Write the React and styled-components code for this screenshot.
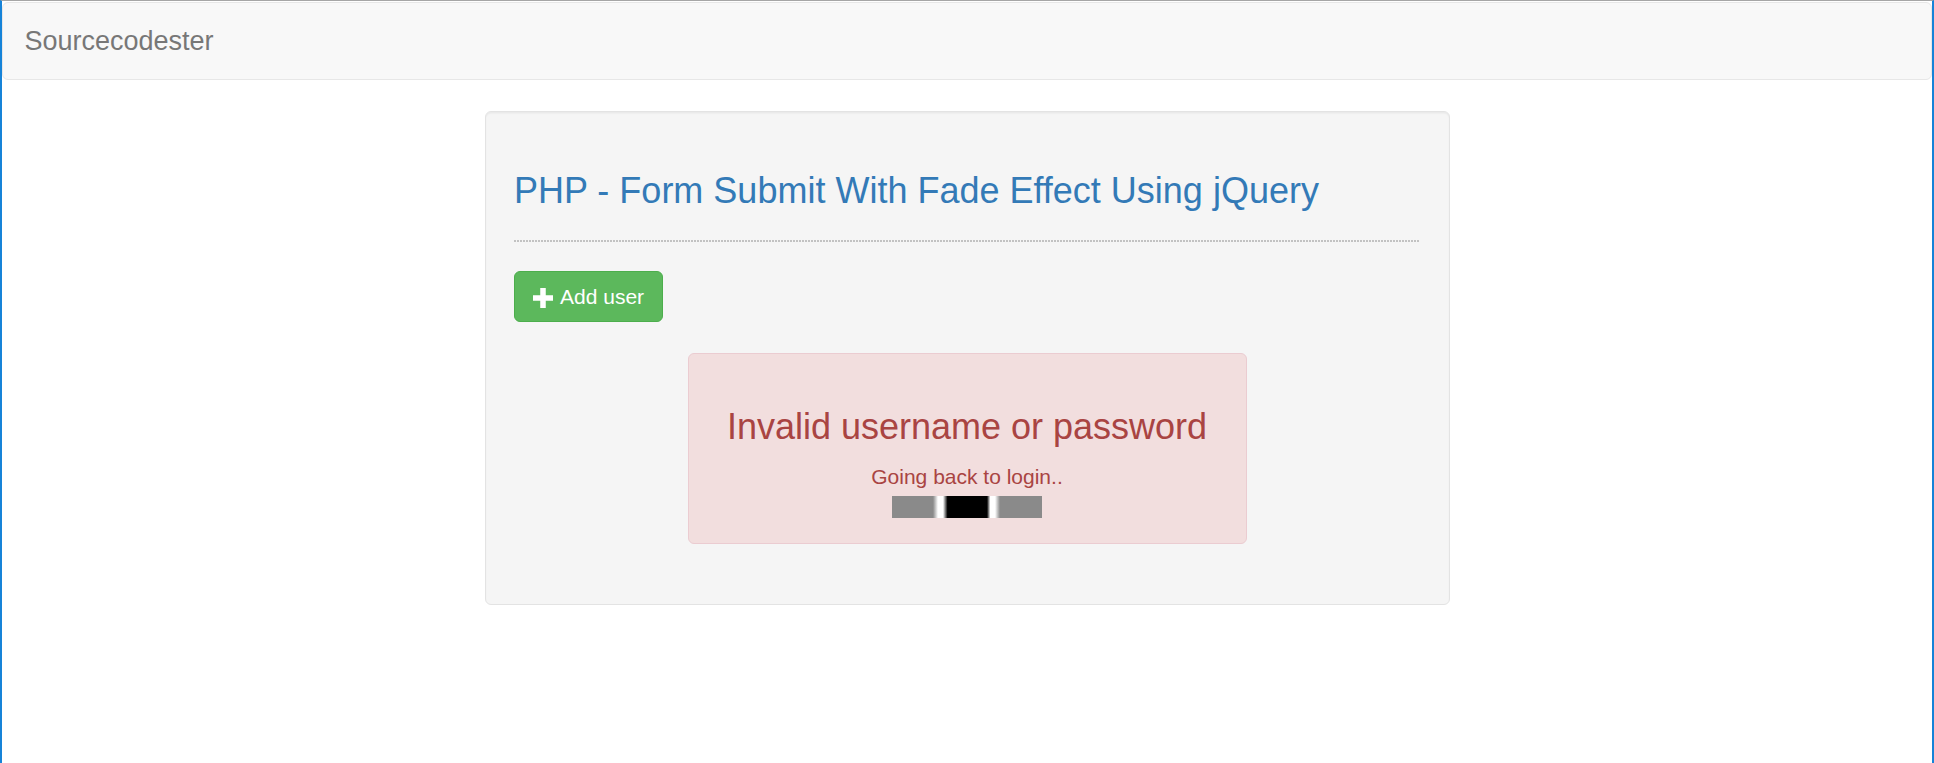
import React from 'react';
import styled, { createGlobalStyle } from 'styled-components';

const colors = {
  brand: '#777',
  title: '#337ab7',
  success: '#5cb85c',
  successBorder: '#4cae4c',
  danger: '#a94442',
  dangerBg: '#f2dede',
  dangerBorder: '#ebccd1',
};

const GlobalStyle = createGlobalStyle`
  * { box-sizing: border-box; }
  html, body {
    margin: 0;
    padding: 0;
    background: #fff;
  }
  body {
    font-family: "Liberation Sans", Arial, Helvetica, sans-serif;
    font-size: 21px;
    line-height: 1.42857;
    color: #333;
  }
`;

const Frame = styled.div`
  min-height: 763px;
  border-top: 1px solid #a6a6a6;
  border-left: 2px solid #1683d8;
  border-right: 2px solid #1683d8;
  padding-top: 1px;
`;

const Navbar = styled.nav`
  height: 78px;
  display: flex;
  align-items: center;
  padding-left: 21.5px;
  background: #f8f8f8;
  border: 1.5px solid #e7e7e7;
  border-radius: 6px;
`;

const Brand = styled.a`
  font-size: 27px;
  line-height: 30px;
  color: ${colors.brand};
  text-decoration: none;
`;

const Well = styled.main`
  width: 965px;
  margin: 31px auto 0;
  padding: 28.5px;
  background: #f5f5f5;
  border: 1.5px solid #e3e3e3;
  border-radius: 6px;
  box-shadow: inset 0 1.5px 1.5px rgba(0, 0, 0, 0.05);
`;

const Title = styled.h3`
  margin: 30px 0 0;
  font-size: 36px;
  line-height: 39.6px;
  font-weight: 500;
  color: ${(p) => p.color || colors.title};
`;

const Divider = styled.div`
  height: 1.5px;
  margin: 30.4px 0 29.5px;
  background: repeating-linear-gradient(to right, #c2c2c2 0, #c2c2c2 2px, transparent 2px, transparent 3px);
`;

const Button = styled.button`
  display: inline-flex;
  align-items: center;
  gap: 7px;
  height: 51px;
  padding: 0 18px;
  font-family: inherit;
  font-size: 21px;
  line-height: 30px;
  color: #fff;
  background: ${colors.success};
  border: 1.5px solid ${colors.successBorder};
  border-radius: 6px;
  cursor: pointer;
`;

const PlusIcon = styled.svg`
  width: 20px;
  height: 20px;
  margin-top: 2px;
  fill: #fff;
`;

const Alert = styled.div`
  width: 559px;
  margin: 31px auto 31px;
  padding: 22.5px;
  text-align: center;
  color: ${colors.danger};
  background: ${colors.dangerBg};
  border: 1.5px solid ${colors.dangerBorder};
  border-radius: 6px;
`;

const AlertTitle = styled(Title)`
  margin-bottom: 15px;
`;

const AlertText = styled.p`
  margin: 0;
  font-size: 21px;
  line-height: 30px;
`;

const Loader = styled.div`
  width: 150px;
  height: 22px;
  margin: 4.4px auto 3px;
  background: linear-gradient(
    to right,
    #8a8a8a 0,
    #8a8a8a 41px,
    #fff 46px,
    #fff 51px,
    #000 55.6px,
    #000 95px,
    #fff 98.3px,
    #fff 103px,
    #8a8a8a 108px,
    #8a8a8a 150px
  );
`;

const App = () => {
  return (
    <>
      <GlobalStyle />
      <Frame>
        <Navbar>
          <Brand href="#">Sourcecodester</Brand>
        </Navbar>
        <Well>
          <Title>PHP - Form Submit With Fade Effect Using jQuery</Title>
          <Divider />
          <Button type="button">
            <PlusIcon viewBox="0 0 20 20">
              <rect x="7.25" y="0" width="5.5" height="20" />
              <rect x="0" y="7.25" width="20" height="5.5" />
            </PlusIcon>
            Add user
          </Button>
          <Alert>
            <AlertTitle color={colors.danger}>Invalid username or password</AlertTitle>
            <AlertText>Going back to login..</AlertText>
            <Loader />
          </Alert>
        </Well>
      </Frame>
    </>
  );
};

export default App;
